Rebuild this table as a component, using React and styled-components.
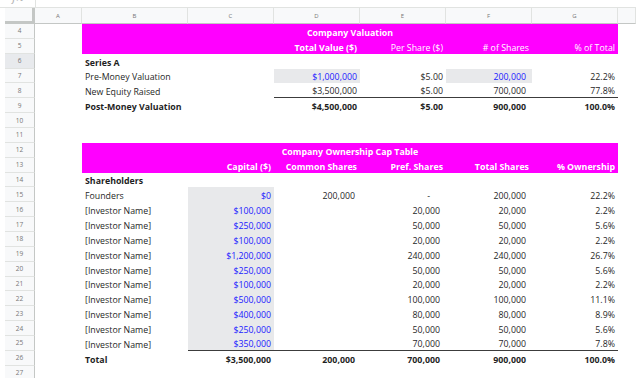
import React from 'react'
import styled, { createGlobalStyle } from 'styled-components'

const MAGENTA = '#ff00ff'
const INPUT = '#e8e9eb'
const GRID = '#e1e3e1'
const FROZEN = '#c4c7c5'
const COLS = '30px 47px 106px 86px 86px 86px 86px 86px 18px'
const ROW_H = 14.86

const GlobalStyle = createGlobalStyle`
  html, body {
    margin: 0;
    padding: 0;
    background: #fff;
  }
  body {
    font-family: 'Open Sans', 'Liberation Sans', sans-serif;
    overflow: hidden;
  }
`

const Page = styled.div`
  width: 636px;
  height: 378px;
  overflow: hidden;
`

const FormulaBar = styled.div`
  height: 8px;
  display: flex;
  border-bottom: 1px solid ${GRID};
  box-sizing: border-box;
  overflow: hidden;
`

const FxBox = styled.div`
  width: 36px;
  border-right: 1px solid ${GRID};
  box-sizing: border-box;
  overflow: hidden;
`

const Fx = styled.span`
  display: block;
  margin: -9px 0 0 12px;
  font: italic 12px/12px 'DejaVu Serif', serif;
  color: #b5b5b5;
`

const ColHeader = styled.div`
  display: grid;
  grid-template-columns: ${COLS};
  height: 16px;
  padding-left: 5px;
`

const Corner = styled.div`
  background: #f8f9fa;
  border-right: 3px solid ${FROZEN};
  border-bottom: 3px solid ${FROZEN};
  box-sizing: border-box;
`

const Letter = styled.div`
  display: flex;
  align-items: center;
  justify-content: center;
  background: #f8f9fa;
  border-right: 1px solid ${GRID};
  border-bottom: 1px solid ${FROZEN};
  box-sizing: border-box;
  font-size: 6px;
  color: #777;
`

const Row = styled.div`
  display: grid;
  grid-template-columns: ${COLS};
  height: ${ROW_H}px;
  padding-left: 5px;
`

const RowNum = styled.div`
  display: flex;
  align-items: center;
  justify-content: center;
  background: ${p => (p.$active ? '#e8eaed' : '#f8f9fa')};
  border-right: 1px solid ${FROZEN};
  border-bottom: 1px solid ${GRID};
  box-sizing: border-box;
  font-size: 6.5px;
  color: #777;
`

const Blank = styled.div``

const Cell = styled.div`
  grid-column: span ${p => p.$span || 1};
  display: flex;
  align-items: flex-end;
  justify-content: ${p =>
    p.$align === 'center' ? 'center' : p.$align === 'left' ? 'flex-start' : 'flex-end'};
  padding: 0 ${p => p.$inset ?? 3}px 0 3px;
  box-sizing: border-box;
  min-width: 0;
  background: ${p => (p.$band ? MAGENTA : p.$input ? INPUT : 'transparent')};
  color: ${p => (p.$band ? '#fff' : p.$input ? '#1a1aff' : '#1f1f1f')};
  font-size: 8.8px;
  line-height: 12px;
  font-weight: ${p => (p.$bold ? 700 : 400)};
  border-bottom: ${p => (p.$rule ? '1px solid #3c3c3c' : 'none')};
  white-space: nowrap;
`

const investor = (cap, shares, pct) => [
  '[Investor Name]',
  { t: cap, input: true },
  null,
  { t: shares, inset: 6 },
  { t: shares, inset: 6 },
  pct,
]

const rows = [
  { n: 4, band: true, cells: [{ t: 'Company Valuation', span: 6, align: 'center', bold: true }] },
  { n: 5, band: true, cells: [null, null, { t: 'Total Value ($)', bold: true }, 'Per Share ($)', '# of Shares', '% of Total'] },
  { n: 6, active: true, cells: [{ t: 'Series A', bold: true }] },
  { n: 7, cells: ['Pre-Money Valuation', null, { t: '$1,000,000', input: true }, '$5.00', { t: '200,000', input: true, inset: 6 }, '22.2%'] },
  { n: 8, ruleFrom: 2, cells: ['New Equity Raised', null, '$3,500,000', '$5.00', { t: '700,000', inset: 6 }, '77.8%'] },
  { n: 9, bold: true, cells: ['Post-Money Valuation', null, '$4,500,000', '$5.00', { t: '900,000', inset: 6 }, '100.0%'] },
  { n: 10, cells: [] },
  { n: 11, cells: [] },
  { n: 12, band: true, cells: [{ t: 'Company Ownership Cap Table', span: 6, align: 'center', bold: true }] },
  { n: 13, band: true, bold: true, cells: [null, 'Capital ($)', 'Common Shares', 'Pref. Shares', 'Total Shares', '% Ownership'] },
  { n: 14, cells: [{ t: 'Shareholders', bold: true }] },
  { n: 15, cells: ['Founders', { t: '$0', input: true }, { t: '200,000', inset: 5 }, { t: '-', inset: 16 }, { t: '200,000', inset: 6 }, '22.2%'] },
  { n: 16, cells: investor('$100,000', '20,000', '2.2%') },
  { n: 17, cells: investor('$250,000', '50,000', '5.6%') },
  { n: 18, cells: investor('$100,000', '20,000', '2.2%') },
  { n: 19, cells: investor('$1,200,000', '240,000', '26.7%') },
  { n: 20, cells: investor('$250,000', '50,000', '5.6%') },
  { n: 21, cells: investor('$100,000', '20,000', '2.2%') },
  { n: 22, cells: investor('$500,000', '100,000', '11.1%') },
  { n: 23, cells: investor('$400,000', '80,000', '8.9%') },
  { n: 24, cells: investor('$250,000', '50,000', '5.6%') },
  { n: 25, ruleFrom: 1, cells: investor('$350,000', '70,000', '7.8%') },
  { n: 26, bold: true, cells: ['Total', '$3,500,000', { t: '200,000', inset: 5 }, { t: '700,000', inset: 6 }, { t: '900,000', inset: 6 }, '100.0%'] },
  { n: 27, cells: [] },
]

const SheetRow = ({ row }) => {
  const specs = [...row.cells]
  while (specs.reduce((sum, s) => sum + ((s && s.span) || 1), 0) < 6) specs.push(null)

  return (
    <Row>
      <RowNum $active={row.active}>{row.n}</RowNum>
      <Blank />
      {specs.map((spec, i) => {
        const s = spec == null ? {} : typeof spec === 'string' ? { t: spec } : spec
        return (
          <Cell
            key={i}
            $span={s.span}
            $align={s.align || (i === 0 ? 'left' : 'right')}
            $bold={s.bold || row.bold}
            $band={row.band}
            $input={s.input}
            $inset={s.inset}
            $rule={row.ruleFrom != null && i >= row.ruleFrom}
          >
            {s.t}
          </Cell>
        )
      })}
      <Blank />
    </Row>
  )
}

const App = () => {
  return (
    <Page>
      <GlobalStyle />
      <FormulaBar>
        <FxBox>
          <Fx>fx</Fx>
        </FxBox>
      </FormulaBar>
      <ColHeader>
        <Corner />
        {['A', 'B', 'C', 'D', 'E', 'F', 'G', ''].map(l => (
          <Letter key={l || 'end'}>{l}</Letter>
        ))}
      </ColHeader>
      {rows.map(row => (
        <SheetRow key={row.n} row={row} />
      ))}
    </Page>
  )
}

export default App
